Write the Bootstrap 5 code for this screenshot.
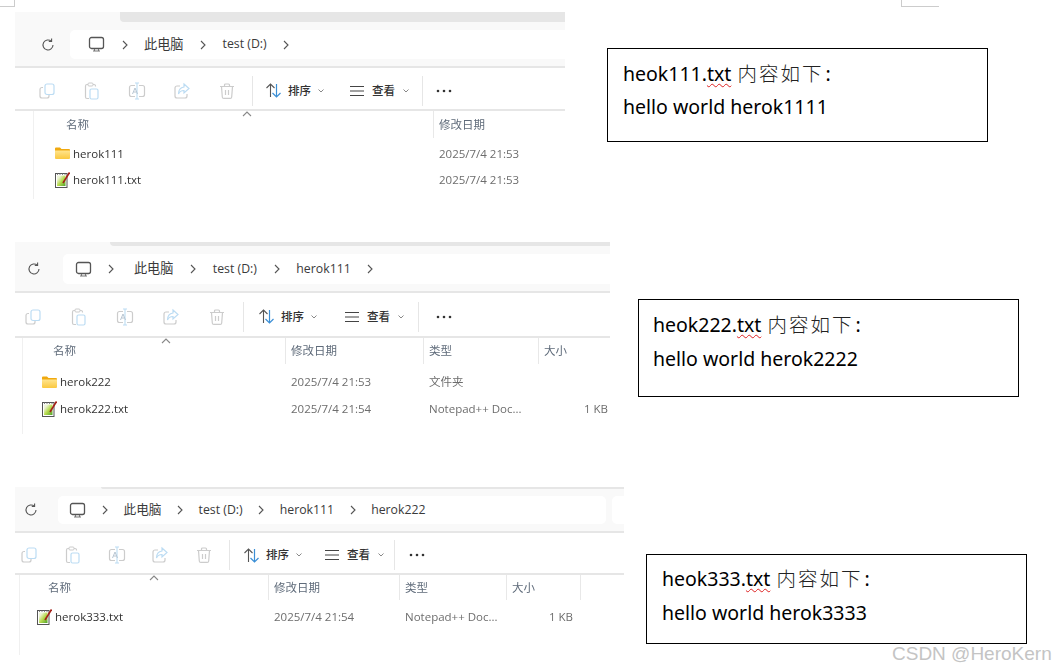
<!DOCTYPE html>
<html lang="en">
<head>
    <meta charset="UTF-8">
    <meta name="viewport" content="width=device-width, initial-scale=1.0">
    <title>herok</title>
    <link href="https://cdn.jsdelivr.net/npm/bootstrap@5.3.3/dist/css/bootstrap.min.css" rel="stylesheet">
    <style>
        html, body { height: 100%; }
        body {
            background: #fff;
            font-family: "Open Sans", "Noto Sans CJK SC", sans-serif;
            overflow: hidden;
        }
        .doc-page { position: relative; width: 1057px; height: 669px; overflow: hidden; }

        /* page corner marks of the word document */
        .mark-left { position: absolute; left: 0; top: 0; width: 15px; height: 7px; border-right: 1px solid #ccc; border-bottom: 1px solid #ccc; }
        .mark-right { position: absolute; left: 901px; top: 0; width: 38px; height: 7px; border-left: 1px solid #ccc; border-bottom: 1px solid #ccc; }

        /* pasted explorer windows */
        .ex-win { position: absolute; left: 15px; font-size: 11.5px; color: #333; filter: blur(.25px); }
        .win-a { top: 12px; width: 550px; --band: 56px; --tool: 43px; --tool-pad: 22px; --step: 25px; --sep-gap: 15px; --sort-ml: 12px; --sort-w: 84px; --view-w: 73px; --dots-ml: 12px; --line: 18px; --head-h: 27px; --gap-top: 2px; --row-h: 26.5px; --head-pad: 32px; --row-pad: 21px; --c1: 400px; --c2: 140px; --list-h: 88px; --addr-left: 55px; --addr-top: 18px; --addr-h: 29px; --addr-pad: 18px; --addr-gap: 15.5px; --mon-mr: 0px; --strip: 105px; --strip-h: 10px; --ref: 25px; }
        .win-b { top: 242px; width: 595px; --band: 51px; --tool: 45px; --tool-pad: 8px; --step: 26px; --sep-gap: 16px; --sort-ml: 14px; --sort-w: 86px; --view-w: 74px; --dots-ml: 16px; --line: 7px; --head-h: 26px; --gap-top: 4px; --row-h: 27px; --head-pad: 30px; --row-pad: 19px; --c1: 263px; --c2: 138px; --c3: 115px; --c4: 72px; --list-h: 96px; --addr-left: 48px; --addr-top: 12px; --addr-h: 30px; --addr-pad: 11.5px; --addr-gap: 15.7px; --mon-mr: 0px; --chev-mr: 3px; --strip: 95px; --strip-h: 4px; --ref: 11px; --size-pad: 3px; }
        .win-c { top: 487px; width: 609px; --band: 46px; --tool: 42px; --tool-pad: 4px; --step: 23.75px; --sep-gap: 15px; --sort-ml: 13px; --sort-w: 81px; --view-w: 70px; --dots-ml: 13px; --line: 4px; --head-h: 25px; --gap-top: 3px; --row-h: 27px; --head-pad: 28px; --row-pad: 17px; --c1: 249px; --c2: 131px; --c3: 107px; --c4: 74px; --list-h: 80px; --addr-left: 43px; --addr-top: 9px; --addr-h: 28px; --addr-pad: 10.5px; --addr-gap: 14.5px; --mon-mr: 1px; --strip: 86px; --strip-h: 2px; --ref: 8px; --size-pad: 8px; }

        .addr-band { position: relative; height: var(--band); background: #f9f9f9; border-bottom: 2px solid #e6e6e6; }
        .tab-strip { height: var(--strip-h); margin-left: var(--strip); background: #e6e6e6; border-bottom-left-radius: 4px; }
        .refresh-ico { position: absolute; left: var(--ref); top: calc(var(--addr-top) + var(--addr-h) / 2 - 8px); width: 16px; height: 16px; }
        .addr-box { position: absolute; left: var(--addr-left); right: 0; top: var(--addr-top); height: var(--addr-h); background: #fff; border-radius: 5px 0 0 5px; padding-left: var(--addr-pad); gap: var(--addr-gap); font-size: 12.3px; color: #3a3a3a; }
        .addr-box .zh-crumb { font-size: 13.2px; }
        .win-c .addr-box .zh-crumb { font-size: 12.7px; }
        .win-c .addr-box { right: 18px; border-radius: 5px; }
        .addr-stub { position: absolute; right: 0; top: var(--addr-top); width: 12px; height: var(--addr-h); background: #fff; border-radius: 5px 0 0 5px; }
        .monitor-ico { width: 17px; height: 17px; margin-right: var(--mon-mr); }
        .chev-ico { width: 8px; height: 10px; }
        .chev-first { margin-right: var(--chev-mr, 0px); }

        .tool-row { height: var(--tool); padding-left: var(--tool-pad); padding-top: 4px; border-bottom: 2px solid #e6e6e6; background: #fff; }
        .tool-btn { width: 20px; height: 20px; margin-right: var(--step); flex: none; }
        .tool-btn svg { width: 18px; height: 18px; }
        .tool-btn.last-btn { margin-right: var(--sep-gap); }
        .tool-sep { width: 1px; height: 30px; background: #e6e6e6; flex: none; }
        .sort-btn, .view-btn { font-size: 11.5px; color: #333; font-weight: 500; flex: none; }
        .sort-btn { margin-left: var(--sort-ml); gap: 6px; width: var(--sort-w); }
        .view-btn { gap: 7px; width: var(--view-w); }
        .sort-btn .act-ico { width: 17px; height: 17px; }
        .view-btn .act-ico { width: 16px; height: 16px; }
        .caret-ico { width: 8px; height: 6px; margin-left: 0; }
        .more-dots { width: 18px; height: 4px; margin-left: var(--dots-ml); }

        .list-area { position: relative; margin-left: var(--line); height: var(--list-h); border-left: 1px solid #f0f0f0; }
        .head-row { height: var(--head-h); }
        .head-cell { height: 100%; padding-left: 5px; color: #5f6b7a; border-right: 1px solid #e8e8e8; flex: none; }
        .head-cell.first-col { padding-left: var(--head-pad); }
        .col-name { width: var(--c1); }
        .col-date { width: var(--c2); }
        .col-kind { width: var(--c3); }
        .col-size { width: var(--c4); }
        .sort-caret { position: absolute; top: 0; width: 10px; height: 6px; }
        .win-a .sort-caret { left: 208px; }
        .win-b .sort-caret { left: 138px; }
        .win-c .sort-caret { left: 129px; }
        .file-row { height: var(--row-h); }
        .file-cell { flex: none; padding-left: 5px; color: #6d6d6d; white-space: nowrap; }
        .file-cell.first-col { padding-left: var(--row-pad); color: #333; gap: 3px; }
        .file-cell.size-val { text-align: right; padding-right: var(--size-pad, 2px); }
        .file-ico { width: 15px; height: 16px; flex: none; }
        .rows-top { height: var(--gap-top); }

        /* text boxes */
        .note-box { position: absolute; width: 381px; border: 1px solid #000; padding: 7px 0 0 15px; font-family: "Noto Sans", "Noto Sans CJK SC", sans-serif; font-size: 19.5px; line-height: 33px; color: #000; background: #fff; }
        .note-a { left: 607px; top: 48px; height: 94px; }
        .note-b { left: 638px; top: 299px; height: 98px; padding-left: 14px; line-height: 34px; }
        .note-c { left: 646px; top: 554px; height: 90px; padding-top: 6px; line-height: 34px; }
        .typo-word { text-decoration: underline wavy #d22; text-decoration-thickness: 1px; text-underline-offset: 2px; }
        .cjk-part { font-family: "Noto Sans CJK SC", sans-serif; font-weight: 300; letter-spacing: 2px; margin-left: 1px; margin-right: 2px; color: #222; }

        .csdn-mark { position: absolute; left: 892px; top: 640px; font-family: "Liberation Sans", sans-serif; font-size: 19px; color: #c4c4c4; white-space: nowrap; }
    </style>
</head>
<body>
    <svg width="0" height="0" class="position-absolute">
        <defs>
            <symbol id="i-refresh" viewBox="0 0 16 16"><path d="M13 8a5 5 0 1 1-1.6-3.7M11.6 1.6v2.9H8.8" fill="none" stroke="#555" stroke-width="1.1"/></symbol>
            <symbol id="i-monitor" viewBox="0 0 17 17"><rect x="1.5" y="1.5" width="14" height="11" rx="2" fill="none" stroke="#555" stroke-width="1.3"/><path d="M5 15h7M6.5 13v2M10.5 13v2" stroke="#777" stroke-width="1.1"/></symbol>
            <symbol id="i-chev" viewBox="0 0 8 10"><path d="M2 1l4 4-4 4" fill="none" stroke="#555" stroke-width="1.1"/></symbol>
            <symbol id="i-copy" viewBox="0 0 18 18"><path d="M5 5.5H4a2 2 0 0 0-2 2V14a2 2 0 0 0 2 2h5a2 2 0 0 0 2-2v-1" fill="none" stroke="#ccc" stroke-width="1.2"/><rect x="7" y="2" width="9" height="10.5" rx="2" fill="none" stroke="#bcdcf3" stroke-width="1.2"/></symbol>
            <symbol id="i-paste" viewBox="0 0 18 18"><path d="M12.5 4.5V4a1.5 1.5 0 0 0-1.5-1.500H4A1.500 1.500 0 0 0 2.500 4v11A1.500 1.500 0 0 0 4 16.500h2" fill="none" stroke="#ccc" stroke-width="1.2"/><rect x="5" y="1" width="5" height="3" rx="1" fill="#fff" stroke="#ccc"/><rect x="7" y="7" width="8" height="10" rx="1.500" fill="#fff" stroke="#bcdcf3" stroke-width="1.2"/></symbol>
            <symbol id="i-rename" viewBox="0 0 18 18"><path d="M7 3.500H3.500a2 2 0 0 0-2 2v7a2 2 0 0 0 2 2H7M11 3.500h3.500a2 2 0 0 1 2 2v7a2 2 0 0 1-2 2H11" fill="none" stroke="#ccc" stroke-width="1.2"/><path d="M9 1v16M7 1h4M7 17h4" stroke="#bcdcf3" stroke-width="1.1"/><path d="M4.500 12L7 6l2.500 6M5.500 10h3" fill="none" stroke="#b8c6d2" stroke-width="1"/></symbol>
            <symbol id="i-share" viewBox="0 0 18 18"><path d="M7 4H4a2 2 0 0 0-2 2v8a2 2 0 0 0 2 2h8a2 2 0 0 0 2-2v-2" fill="none" stroke="#ccc" stroke-width="1.2"/><path d="M11 2l5 4.500-5 4.500V8.500c-3 0-4.500 1-5.500 3.500 0-4 2-6.500 5.500-7z" fill="none" stroke="#bcdcf3" stroke-width="1.2"/></symbol>
            <symbol id="i-trash" viewBox="0 0 18 18"><path d="M2 4.500h14M6.500 4.500V3a1 1 0 0 1 1-1h3a1 1 0 0 1 1 1v1.500M3.500 4.500l.8 10.500a1.500 1.500 0 0 0 1.500 1.400h6.400a1.500 1.500 0 0 0 1.500-1.400l.8-10.500M7.500 8v5M10.500 8v5" fill="none" stroke="#ccc" stroke-width="1.2"/></symbol>
            <symbol id="i-sort" viewBox="0 0 17 17"><path d="M5.500 15V2M1.500 6l4-4 4 4" fill="none" stroke="#555" stroke-width="1.1"/><path d="M11.500 2v13M7.500 11l4 4 4-4" fill="none" stroke="#3b8fd6" stroke-width="1.2"/></symbol>
            <symbol id="i-lines" viewBox="0 0 16 16"><path d="M1 3.500h14M1 8h14M1 12.500h14" stroke="#444" stroke-width="1.1"/></symbol>
            <symbol id="i-caret" viewBox="0 0 8 6"><path d="M1.500 1.500l2.500 2.500 2.500-2.500" fill="none" stroke="#888" stroke-width="1"/></symbol>
            <symbol id="i-dots" viewBox="0 0 18 4"><circle cx="3" cy="2" r="1.300" fill="#333"/><circle cx="9" cy="2" r="1.300" fill="#333"/><circle cx="15" cy="2" r="1.300" fill="#333"/></symbol>
            <symbol id="i-up" viewBox="0 0 10 6"><path d="M1 5l4-4 4 4" fill="none" stroke="#888" stroke-width="1.100"/></symbol>
            <linearGradient id="folder-fill" x1="0" y1="0" x2="0" y2="1"><stop offset="0" stop-color="#ffe58f"/><stop offset="1" stop-color="#fbc83f"/></linearGradient>
            <linearGradient id="note-fill" x1="0" y1="0" x2="1" y2="1"><stop offset=".2" stop-color="#eef5d8"/><stop offset=".55" stop-color="#b5d94a"/><stop offset="1" stop-color="#4da32f"/></linearGradient>
            <symbol id="i-folder" viewBox="0 0 15 16"><path d="M0 3.500A1 1 0 0 1 1 2.500h4l1.500 1.500H14a1 1 0 0 1 1 1v1H0z" fill="#f0a90f"/><path d="M0 5.500h15V13a1 1 0 0 1-1 1H1a1 1 0 0 1-1-1z" fill="url(#folder-fill)"/></symbol>
            <symbol id="i-note" viewBox="0 0 15 16"><rect x=".5" y="1.500" width="11.500" height="14" fill="#fff" stroke="#555"/><rect x="2" y="3.500" width="8.500" height="10.500" fill="url(#note-fill)"/><path d="M2.500 1v2M5 1v2M7.500 1v2M10 1v2" stroke="#666" stroke-width=".8"/><path d="M14.500 .5L8 11" stroke="#a52018" stroke-width="1.600"/></symbol>
        </defs>
    </svg>

    <div class="doc-page">
        <div class="mark-left"></div>
        <div class="mark-right"></div>

        <!-- first window -->
        <section class="ex-win win-a">
            <div class="addr-band">
                <div class="tab-strip"></div>
                <svg class="refresh-ico"><use href="#i-refresh"/></svg>
                <div class="addr-box d-flex align-items-center">
                    <svg class="monitor-ico"><use href="#i-monitor"/></svg>
                    <svg class="chev-ico chev-first"><use href="#i-chev"/></svg>
                    <span class="zh-crumb">此电脑</span>
                    <svg class="chev-ico"><use href="#i-chev"/></svg>
                    <span>test (D:)</span>
                    <svg class="chev-ico"><use href="#i-chev"/></svg>
                </div>
            </div>
            <div class="tool-row d-flex align-items-center">
                <div class="tool-btn d-flex justify-content-center align-items-center"><svg><use href="#i-copy"/></svg></div>
                <div class="tool-btn d-flex justify-content-center align-items-center"><svg><use href="#i-paste"/></svg></div>
                <div class="tool-btn d-flex justify-content-center align-items-center"><svg><use href="#i-rename"/></svg></div>
                <div class="tool-btn d-flex justify-content-center align-items-center"><svg><use href="#i-share"/></svg></div>
                <div class="tool-btn last-btn d-flex justify-content-center align-items-center"><svg><use href="#i-trash"/></svg></div>
                <div class="tool-sep"></div>
                <div class="sort-btn d-flex align-items-center"><svg class="act-ico"><use href="#i-sort"/></svg><span>排序</span><svg class="caret-ico"><use href="#i-caret"/></svg></div>
                <div class="view-btn d-flex align-items-center"><svg class="act-ico"><use href="#i-lines"/></svg><span>查看</span><svg class="caret-ico"><use href="#i-caret"/></svg></div>
                <div class="tool-sep"></div>
                <svg class="more-dots"><use href="#i-dots"/></svg>
            </div>
            <div class="list-area">
                <svg class="sort-caret"><use href="#i-up"/></svg>
                <div class="head-row d-flex">
                    <div class="head-cell first-col col-name d-flex align-items-center">名称</div>
                    <div class="head-cell col-date d-flex align-items-center border-0">修改日期</div>
                </div>
                <div class="rows-top"></div>
                <div class="file-row d-flex align-items-center">
                    <div class="file-cell first-col col-name d-flex align-items-center"><svg class="file-ico"><use href="#i-folder"/></svg>herok111</div>
                    <div class="file-cell col-date">2025/7/4 21:53</div>
                </div>
                <div class="file-row d-flex align-items-center">
                    <div class="file-cell first-col col-name d-flex align-items-center"><svg class="file-ico"><use href="#i-note"/></svg>herok111.txt</div>
                    <div class="file-cell col-date">2025/7/4 21:53</div>
                </div>
            </div>
        </section>

        <!-- second window -->
        <section class="ex-win win-b">
            <div class="addr-band">
                <div class="tab-strip"></div>
                <svg class="refresh-ico"><use href="#i-refresh"/></svg>
                <div class="addr-box d-flex align-items-center">
                    <svg class="monitor-ico"><use href="#i-monitor"/></svg>
                    <svg class="chev-ico chev-first"><use href="#i-chev"/></svg>
                    <span class="zh-crumb">此电脑</span>
                    <svg class="chev-ico"><use href="#i-chev"/></svg>
                    <span>test (D:)</span>
                    <svg class="chev-ico"><use href="#i-chev"/></svg>
                    <span>herok111</span>
                    <svg class="chev-ico"><use href="#i-chev"/></svg>
                </div>
            </div>
            <div class="tool-row d-flex align-items-center">
                <div class="tool-btn d-flex justify-content-center align-items-center"><svg><use href="#i-copy"/></svg></div>
                <div class="tool-btn d-flex justify-content-center align-items-center"><svg><use href="#i-paste"/></svg></div>
                <div class="tool-btn d-flex justify-content-center align-items-center"><svg><use href="#i-rename"/></svg></div>
                <div class="tool-btn d-flex justify-content-center align-items-center"><svg><use href="#i-share"/></svg></div>
                <div class="tool-btn last-btn d-flex justify-content-center align-items-center"><svg><use href="#i-trash"/></svg></div>
                <div class="tool-sep"></div>
                <div class="sort-btn d-flex align-items-center"><svg class="act-ico"><use href="#i-sort"/></svg><span>排序</span><svg class="caret-ico"><use href="#i-caret"/></svg></div>
                <div class="view-btn d-flex align-items-center"><svg class="act-ico"><use href="#i-lines"/></svg><span>查看</span><svg class="caret-ico"><use href="#i-caret"/></svg></div>
                <div class="tool-sep"></div>
                <svg class="more-dots"><use href="#i-dots"/></svg>
            </div>
            <div class="list-area">
                <svg class="sort-caret"><use href="#i-up"/></svg>
                <div class="head-row d-flex">
                    <div class="head-cell first-col col-name d-flex align-items-center">名称</div>
                    <div class="head-cell col-date d-flex align-items-center">修改日期</div>
                    <div class="head-cell col-kind d-flex align-items-center">类型</div>
                    <div class="head-cell col-size d-flex align-items-center border-0">大小</div>
                </div>
                <div class="rows-top"></div>
                <div class="file-row d-flex align-items-center">
                    <div class="file-cell first-col col-name d-flex align-items-center"><svg class="file-ico"><use href="#i-folder"/></svg>herok222</div>
                    <div class="file-cell col-date">2025/7/4 21:53</div>
                    <div class="file-cell col-kind">文件夹</div>
                    <div class="file-cell size-val col-size"></div>
                </div>
                <div class="file-row d-flex align-items-center">
                    <div class="file-cell first-col col-name d-flex align-items-center"><svg class="file-ico"><use href="#i-note"/></svg>herok222.txt</div>
                    <div class="file-cell col-date">2025/7/4 21:54</div>
                    <div class="file-cell col-kind">Notepad++ Doc...</div>
                    <div class="file-cell size-val col-size">1 KB</div>
                </div>
            </div>
        </section>

        <!-- third window -->
        <section class="ex-win win-c">
            <div class="addr-band">
                <div class="tab-strip"></div>
                <svg class="refresh-ico"><use href="#i-refresh"/></svg>
                <div class="addr-box d-flex align-items-center">
                    <svg class="monitor-ico"><use href="#i-monitor"/></svg>
                    <svg class="chev-ico chev-first"><use href="#i-chev"/></svg>
                    <span class="zh-crumb">此电脑</span>
                    <svg class="chev-ico"><use href="#i-chev"/></svg>
                    <span>test (D:)</span>
                    <svg class="chev-ico"><use href="#i-chev"/></svg>
                    <span>herok111</span>
                    <svg class="chev-ico"><use href="#i-chev"/></svg>
                    <span>herok222</span>
                </div>
                <div class="addr-stub"></div>
            </div>
            <div class="tool-row d-flex align-items-center">
                <div class="tool-btn d-flex justify-content-center align-items-center"><svg><use href="#i-copy"/></svg></div>
                <div class="tool-btn d-flex justify-content-center align-items-center"><svg><use href="#i-paste"/></svg></div>
                <div class="tool-btn d-flex justify-content-center align-items-center"><svg><use href="#i-rename"/></svg></div>
                <div class="tool-btn d-flex justify-content-center align-items-center"><svg><use href="#i-share"/></svg></div>
                <div class="tool-btn last-btn d-flex justify-content-center align-items-center"><svg><use href="#i-trash"/></svg></div>
                <div class="tool-sep"></div>
                <div class="sort-btn d-flex align-items-center"><svg class="act-ico"><use href="#i-sort"/></svg><span>排序</span><svg class="caret-ico"><use href="#i-caret"/></svg></div>
                <div class="view-btn d-flex align-items-center"><svg class="act-ico"><use href="#i-lines"/></svg><span>查看</span><svg class="caret-ico"><use href="#i-caret"/></svg></div>
                <div class="tool-sep"></div>
                <svg class="more-dots"><use href="#i-dots"/></svg>
            </div>
            <div class="list-area">
                <svg class="sort-caret"><use href="#i-up"/></svg>
                <div class="head-row d-flex">
                    <div class="head-cell first-col col-name d-flex align-items-center">名称</div>
                    <div class="head-cell col-date d-flex align-items-center">修改日期</div>
                    <div class="head-cell col-kind d-flex align-items-center">类型</div>
                    <div class="head-cell col-size d-flex align-items-center">大小</div>
                </div>
                <div class="rows-top"></div>
                <div class="file-row d-flex align-items-center">
                    <div class="file-cell first-col col-name d-flex align-items-center"><svg class="file-ico"><use href="#i-note"/></svg>herok333.txt</div>
                    <div class="file-cell col-date">2025/7/4 21:54</div>
                    <div class="file-cell col-kind">Notepad++ Doc...</div>
                    <div class="file-cell size-val col-size">1 KB</div>
                </div>
            </div>
        </section>

        <div class="note-box note-a">
            <div>heok111.<span class="typo-word">txt</span> <span class="cjk-part">内容如下</span>:</div>
            <div>hello world herok1111</div>
        </div>
        <div class="note-box note-b">
            <div>heok222.<span class="typo-word">txt</span> <span class="cjk-part">内容如下</span>:</div>
            <div>hello world herok2222</div>
        </div>
        <div class="note-box note-c">
            <div>heok333.<span class="typo-word">txt</span> <span class="cjk-part">内容如下</span>:</div>
            <div>hello world herok3333</div>
        </div>

        <div class="csdn-mark">CSDN @HeroKern</div>
    </div>

    <script src="https://cdn.jsdelivr.net/npm/bootstrap@5.3.3/dist/js/bootstrap.bundle.min.js"></script>
</body>
</html>
